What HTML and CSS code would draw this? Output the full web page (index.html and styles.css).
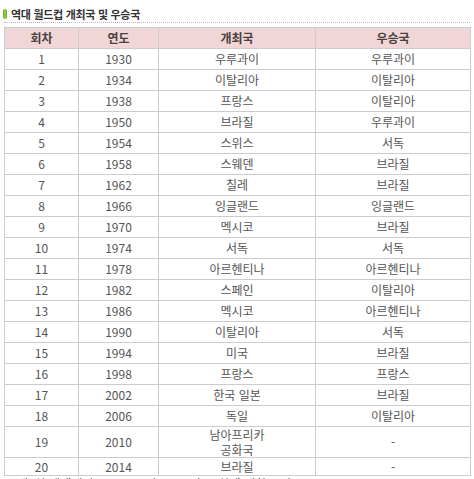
FILE: index.html
```html
<!DOCTYPE html>
<html lang="ko">
<head>
<meta charset="utf-8">
<title>역대 월드컵 개최국 및 우승국</title>
<link rel="stylesheet" href="styles.css">
</head>
<body>
<div class="wrap">
  <h2 class="title"><span class="bullet"></span><span class="title-text">역대 월드컵 개최국 및 우승국</span></h2>
  <table class="cup">
    <colgroup>
      <col class="c1"><col class="c2"><col class="c3"><col class="c4">
    </colgroup>
    <thead>
      <tr><th>회차</th><th>연도</th><th>개최국</th><th>우승국</th></tr>
    </thead>
    <tbody>
      <tr><td>1</td><td>1930</td><td>우루과이</td><td>우루과이</td></tr>
      <tr><td>2</td><td>1934</td><td>이탈리아</td><td>이탈리아</td></tr>
      <tr><td>3</td><td>1938</td><td>프랑스</td><td>이탈리아</td></tr>
      <tr><td>4</td><td>1950</td><td>브라질</td><td>우루과이</td></tr>
      <tr><td>5</td><td>1954</td><td>스위스</td><td>서독</td></tr>
      <tr><td>6</td><td>1958</td><td>스웨덴</td><td>브라질</td></tr>
      <tr><td>7</td><td>1962</td><td>칠레</td><td>브라질</td></tr>
      <tr><td>8</td><td>1966</td><td>잉글랜드</td><td>잉글랜드</td></tr>
      <tr><td>9</td><td>1970</td><td>멕시코</td><td>브라질</td></tr>
      <tr><td>10</td><td>1974</td><td>서독</td><td>서독</td></tr>
      <tr><td>11</td><td>1978</td><td>아르헨티나</td><td>아르헨티나</td></tr>
      <tr><td>12</td><td>1982</td><td>스페인</td><td>이탈리아</td></tr>
      <tr><td>13</td><td>1986</td><td>멕시코</td><td>아르헨티나</td></tr>
      <tr><td>14</td><td>1990</td><td>이탈리아</td><td>서독</td></tr>
      <tr><td>15</td><td>1994</td><td>미국</td><td>브라질</td></tr>
      <tr><td>16</td><td>1998</td><td>프랑스</td><td>프랑스</td></tr>
      <tr><td>17</td><td>2002</td><td>한국 일본</td><td>브라질</td></tr>
      <tr><td>18</td><td>2006</td><td>독일</td><td>이탈리아</td></tr>
      <tr><td>19</td><td>2010</td><td class="two">남아프리카<br>공화국</td><td>-</td></tr>
      <tr class="last"><td>20</td><td>2014</td><td>브라질</td><td>-</td></tr>
    </tbody>
  </table>
  <p class="note">제2차 세계대전으로 1942년, 1946년 두 차례 개최 무산</p>
</div>
</body>
</html>
```
FILE: styles.css
```css
html, body {
  margin: 0;
  padding: 0;
  background: #ffffff;
}
.wrap {
  padding: 6px 4px 0 4px;
  font-family: "Noto Sans CJK KR", "Noto Sans", sans-serif;
  color: #555555;
}
.title {
  display: flex;
  align-items: center;
  gap: 4px;
  margin: 0;
  height: 16px;
  border-bottom: 1px dotted #b8b8b8;
  font-size: 11px;
  line-height: 16px;
  font-weight: bold;
  color: #333333;
}
.bullet {
  display: block;
  width: 4px;
  height: 10px;
  margin-left: -1px;
  border-radius: 2px;
  background: linear-gradient(to right, #5e9e1c, #9fd64a 50%, #5e9e1c);
}
.title-text {
  letter-spacing: -0.3px;
}
.cup {
  margin-top: 4px;
  width: 466px;
  border-collapse: collapse;
  table-layout: fixed;
  font-size: 12px;
}
.c1 { width: 74px; }
.c2 { width: 80px; }
.c3 { width: 157px; }
.c4 { width: 155px; }
.cup th,
.cup td {
  border: 1px solid #cccccc;
  text-align: center;
  padding: 0;
  line-height: 14px;
  height: 20px;
}
.cup th {
  background: #f0d6d6;
  color: #4a3f3f;
  font-weight: bold;
}
.cup td {
  color: #555555;
}
.cup td.two {
  line-height: 15px;
}
.cup tr.last td {
  height: 17px;
}
.note {
  margin: 0;
  padding: 1px 0 0 13px;
  font-size: 12px;
  line-height: 14px;
  color: #222222;
}
```
